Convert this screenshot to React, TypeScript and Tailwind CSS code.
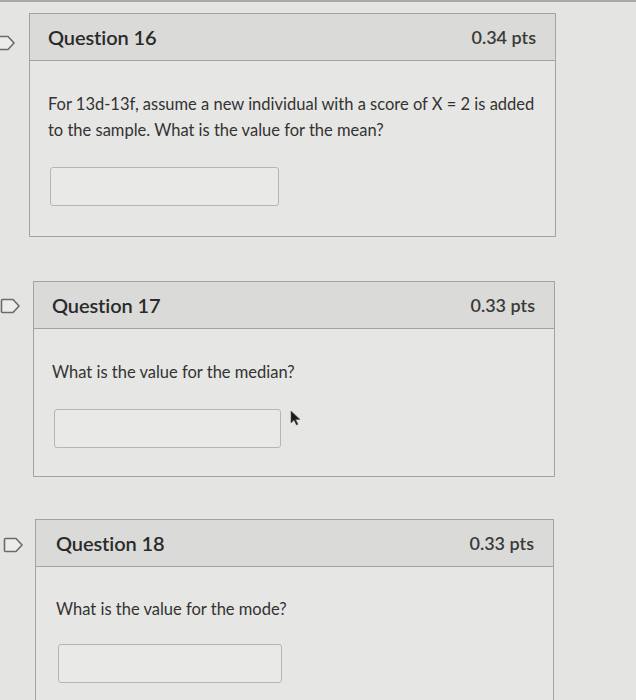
import React from "react";

function Flag() {
  return (
    <svg width="21" height="16" viewBox="0 0 21 16" fill="none">
      <path d="M1.5 2.5 Q1.5 1.5 2.5 1.5 H13 L19 8 L13 14.5 H2.5 Q1.5 14.5 1.5 13.5 Z" stroke="#6b6b6b" strokeWidth="1.6" strokeLinejoin="round" fill="#ececea" />
    </svg>
  );
}

type Q = {
  title: string;
  pts: string;
  lines: string[];
  ml: string;
  w: string;
  flagCls: string;
  mt: string;
  px: string;
  pt: string;
  pb: string;
  gap: string;
  inputW: string;
};

function Card({ q, cursor }: { q: Q; cursor?: boolean }) {
  return (
    <div className={`relative ${q.mt}`}>
      <div className={`absolute ${q.flagCls}`}>
        <Flag />
      </div>
      <div className={`${q.ml} ${q.w} border border-[#a3a3a1] bg-[#e6e6e4]`}>
        <div className={`h-[47px] flex items-center justify-between ${q.px} pr-[19px] bg-[#dadad8] border-b border-[#a3a3a1]`}>
          <span className="text-[20px] font-semibold text-[#2a2a2a] tracking-[-0.1px]">{q.title}</span>
          <span className="text-[18px] font-semibold text-[#3a3a3a]">{q.pts}</span>
        </div>
        <div className={`${q.px} ${q.pt} ${q.pb} relative`}>
          <p className="text-[16.5px] leading-[26px] text-[#333333]">
            {q.lines.map((l, i) => (
              <React.Fragment key={i}>
                {l}
                {i < q.lines.length - 1 && <br />}
              </React.Fragment>
            ))}
          </p>
          <div className={`${q.gap} h-[39px] ${q.inputW} ml-[2px] border border-[#b5b5b3] rounded-[3px] bg-[#e9e9e7]`} />
          {cursor && (
            <svg className="absolute left-[256px] top-[81px]" width="12" height="16" viewBox="0 0 12 16">
              <path d="M1 1 L1 13 L4 10 L6.5 15 L8 14.2 L5.6 9.4 L10 9.4 Z" fill="#1a1a1a" stroke="#555" strokeWidth="0.6" />
            </svg>
          )}
        </div>
      </div>
    </div>
  );
}

export default function App() {
  const qs: Q[] = [
    {
      title: "Question 16",
      pts: "0.34 pts",
      lines: [
        "For 13d-13f, assume a new individual with a score of X = 2 is added",
        "to the sample. What is the value for the mean?",
      ],
      ml: "ml-[29px]",
      w: "w-[527px]",
      flagCls: "left-[-5px] top-[22px]",
      mt: "mt-[11px]",
      px: "pl-[18px]",
      pt: "pt-[30px]",
      pb: "pb-[30px]",
      gap: "mt-[24px]",
      inputW: "w-[229px]",
    },
    {
      title: "Question 17",
      pts: "0.33 pts",
      lines: ["What is the value for the median?"],
      ml: "ml-[33px]",
      w: "w-[522px]",
      flagCls: "left-[0px] top-[17px]",
      mt: "mt-[44px]",
      px: "pl-[18px]",
      pt: "pt-[30px]",
      pb: "pb-[28px]",
      gap: "mt-[24px]",
      inputW: "w-[227px]",
    },
    {
      title: "Question 18",
      pts: "0.33 pts",
      lines: ["What is the value for the mode?"],
      ml: "ml-[35px]",
      w: "w-[519px]",
      flagCls: "left-[3px] top-[18px]",
      mt: "mt-[42px]",
      px: "pl-[20px]",
      pt: "pt-[29px]",
      pb: "pb-[30px]",
      gap: "mt-[22px]",
      inputW: "w-[224px]",
    },
  ];
  return (
    <div
      className="w-[636px] h-[700px] overflow-hidden bg-[#e4e4e2]"
      style={{ fontFamily: "Lato, 'Open Sans', sans-serif" }}
    >
      <div className="h-[2px] bg-[#a8a8a6]" />
      {qs.map((q, i) => (
        <Card key={i} q={q} cursor={i === 1} />
      ))}
    </div>
  );
}
